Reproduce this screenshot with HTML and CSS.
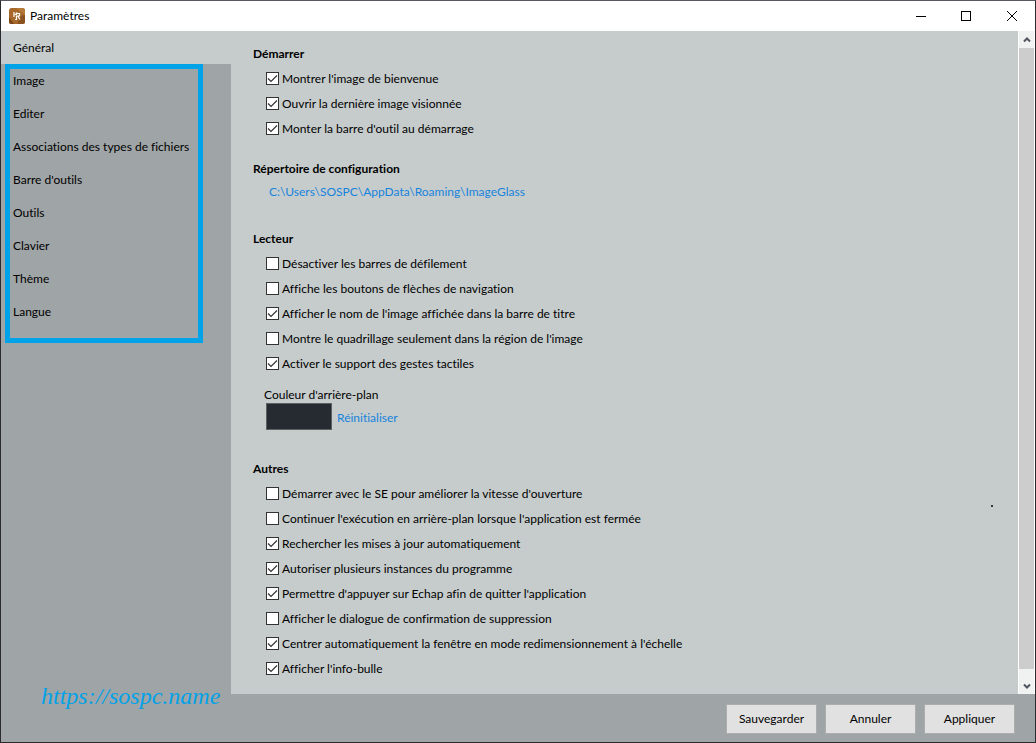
FILE: index.html
```html
<!DOCTYPE html>
<html lang="fr">
<head>
<meta charset="utf-8">
<title>Paramètres</title>
<link rel="stylesheet" href="styles.css">
</head>
<body>
<div class="window">
  <header class="titlebar">
    <svg class="app-icon" viewBox="0 0 16 16" aria-hidden="true">
      <rect width="16" height="16" rx="2.5" fill="#a8682c"/>
      <path d="M0 9L5 16H2.5Q0 16 0 13.5Z" fill="#7a4718"/>
      <path d="M7 0H13.5Q16 0 16 2.5V7Z" fill="#b57a38"/>
      <path d="M12 8L16 7V13.5Q16 16 13.5 16H8Z" fill="#8a5220"/>
      <path d="M5 4V9M8 4.500L6 7M7.500 7.500V5.500H10.500V8H8M7.500 8V11.500M9 8.500L11 11.500M6 11.500H8" fill="none" stroke="#fff" stroke-width="1.200"/>
    </svg>
    <h1 class="title">Paramètres</h1>
    <div class="caption-buttons">
      <button class="caption" type="button" aria-label="Réduire"><svg viewBox="0 0 12 12"><path d="M2 6.500H12" shape-rendering="crispEdges"/></svg></button>
      <button class="caption" type="button" aria-label="Agrandir"><svg viewBox="0 0 12 12"><path d="M1.500 1.500H10.500V10.500H1.500Z" shape-rendering="crispEdges"/></svg></button>
      <button class="caption" type="button" aria-label="Fermer"><svg viewBox="0 0 12 12"><path d="M1 1L11 11M11 1L1 11"/></svg></button>
    </div>
  </header>
  <div class="body">
    <nav class="sidebar">
      <button class="tab tab-active" type="button">Général</button>
      <div class="tab-group">
        <button class="tab" type="button">Image</button>
        <button class="tab" type="button">Editer</button>
        <button class="tab" type="button">Associations des types de fichiers</button>
        <button class="tab" type="button">Barre d'outils</button>
        <button class="tab" type="button">Outils</button>
        <button class="tab" type="button">Clavier</button>
        <button class="tab" type="button">Thème</button>
        <button class="tab" type="button">Langue</button>
        <span class="highlight"></span>
      </div>
    </nav>
    <main class="content">
      <section class="section">
        <h2 class="heading">Démarrer</h2>
        <div class="options">
          <label class="option"><input class="check" type="checkbox" checked>Montrer l'image de bienvenue</label>
          <label class="option"><input class="check" type="checkbox" checked>Ouvrir la dernière image visionnée</label>
          <label class="option"><input class="check" type="checkbox" checked>Monter la barre d'outil au démarrage</label>
        </div>
      </section>
      <section class="section section-config">
        <h2 class="heading">Répertoire de configuration</h2>
        <a class="link config-link" href="#">C:\Users\SOSPC\AppData\Roaming\ImageGlass</a>
      </section>
      <section class="section">
        <h2 class="heading">Lecteur</h2>
        <div class="options">
          <label class="option"><input class="check" type="checkbox">Désactiver les barres de défilement</label>
          <label class="option"><input class="check" type="checkbox">Affiche les boutons de flèches de navigation</label>
          <label class="option"><input class="check" type="checkbox" checked>Afficher le nom de l'image affichée dans la barre de titre</label>
          <label class="option"><input class="check" type="checkbox">Montre le quadrillage seulement dans la région de l'image</label>
          <label class="option"><input class="check" type="checkbox" checked>Activer le support des gestes tactiles</label>
        </div>
        <div class="background">
          <span class="background-label" id="bg-label">Couleur d'arrière-plan</span>
          <div class="background-row">
            <button class="swatch" type="button" aria-labelledby="bg-label"></button>
            <a class="link" href="#">Réinitialiser</a>
          </div>
        </div>
      </section>
      <section class="section section-other">
        <h2 class="heading">Autres</h2>
        <div class="options">
          <label class="option"><input class="check" type="checkbox">Démarrer avec le SE pour améliorer la vitesse d'ouverture</label>
          <label class="option"><input class="check" type="checkbox">Continuer l'exécution en arrière-plan lorsque l'application est fermée</label>
          <label class="option"><input class="check" type="checkbox" checked>Rechercher les mises à jour automatiquement</label>
          <label class="option"><input class="check" type="checkbox" checked>Autoriser plusieurs instances du programme</label>
          <label class="option"><input class="check" type="checkbox" checked>Permettre d'appuyer sur Echap afin de quitter l'application</label>
          <label class="option"><input class="check" type="checkbox">Afficher le dialogue de confirmation de suppression</label>
          <label class="option"><input class="check" type="checkbox" checked>Centrer automatiquement la fenêtre en mode redimensionnement à l'échelle</label>
          <label class="option"><input class="check" type="checkbox" checked>Afficher l'info-bulle</label>
        </div>
      </section>
      <span class="speck"></span>
    </main>
    <div class="scrollbar">
      <button class="arrow" type="button" aria-label="Défiler vers le haut"><svg viewBox="0 0 8 6"><path d="M1 4.500L4 1.500L7 4.500"/></svg></button>
      <div class="thumb"></div>
      <button class="arrow arrow-down" type="button" aria-label="Défiler vers le bas"><svg viewBox="0 0 8 6"><path d="M1 1.500L4 4.500L7 1.500"/></svg></button>
    </div>
  </div>
  <footer class="footer">
    <button class="action" type="button">Sauvegarder</button>
    <button class="action" type="button">Annuler</button>
    <button class="action" type="button">Appliquer</button>
  </footer>
  <a class="watermark" href="#">https://sospc.name</a>
</div>
</body>
</html>
```
FILE: styles.css
```css
* { box-sizing: border-box; }

body {
  margin: 0;
  font: 12px/16px Lato, "Open Sans", sans-serif;
  font-variant-ligatures: none;
  color: #000;
}

button {
  border: 0;
  border-radius: 0;
  padding: 0;
  background: none;
  font: inherit;
  font-variant-ligatures: none;
  color: inherit;
}

.window {
  position: relative;
  display: flex;
  flex-direction: column;
  min-height: 100vh;
  border: 1px solid #2b2b2f;
  border-top-color: #565963;
  background: #9fa4a6;
}

.titlebar {
  display: flex;
  align-items: center;
  height: 30px;
  padding-left: 8px;
  background: #fff;
}

.app-icon { width: 16px; height: 16px; }

.title {
  flex: 1;
  margin: 0 0 0 5px;
  font-size: 12px;
  font-weight: 400;
}

.caption-buttons { display: flex; }

.caption {
  display: grid;
  place-items: center;
  width: 46px;
  height: 30px;
}

.caption svg {
  width: 12px;
  height: 12px;
  fill: none;
  stroke: #000;
}

.body { display: flex; flex: 1; }

.sidebar { flex: none; width: 230px; }

.tab {
  display: block;
  width: 100%;
  height: 33px;
  padding-left: 12px;
  text-align: left;
}

.tab-active { background: #c6cccc; }

.tab-group { position: relative; }

.highlight {
  position: absolute;
  inset: 0 28px -15px 4px;
  border: 5px solid #00a2e8;
  pointer-events: none;
}

.content {
  position: relative;
  flex: 1;
  padding: 15px 22px 10px;
  background: #c6cccc;
}

.heading {
  margin: 0 0 4px;
  font-size: 12px;
  font-weight: 700;
}

.section + .section { margin-top: 20px; }

.section-config + .section,
.section + .section-other { margin-top: 31px; }

.options {
  display: flex;
  flex-direction: column;
  align-items: flex-start;
  padding-left: 13px;
}

.option {
  display: flex;
  align-items: center;
  gap: 3px;
  height: 25px;
}

.check {
  appearance: none;
  width: 13px;
  height: 13px;
  margin: 0;
  border: 1px solid #333;
  background: #fff;
}

.check:checked {
  background: #fff url("data:image/svg+xml,%3Csvg xmlns='http://www.w3.org/2000/svg' viewBox='0 0 11 11'%3E%3Cpath d='M1 5.500L4 8.500L10 2.500' fill='none' stroke='%23333' stroke-width='1.200'/%3E%3C/svg%3E");
}

.link { color: #1683dc; text-decoration: none; }

.config-link { display: block; margin: 7px 0 0 16px; }

.background { padding: 11px 0 0 11px; }

.background-label { display: block; }

.background-row {
  display: flex;
  align-items: flex-end;
  gap: 5px;
  padding-left: 2px;
}

.background-row .link { padding-bottom: 4px; }

.swatch {
  width: 66px;
  height: 27px;
  border: 1px solid #5c6063;
  background: #252b30;
}

.speck {
  position: absolute;
  right: 25px;
  top: 474px;
  width: 2px;
  height: 2px;
  background: #333;
}

.scrollbar {
  display: flex;
  flex-direction: column;
  width: 17px;
  border: solid #fff;
  border-width: 0 1px;
  background: #f0f1f1;
}

.arrow {
  display: grid;
  place-items: center;
  height: 17px;
}

.arrow-down { height: 25px; padding-top: 8px; }

.arrow svg {
  width: 8px;
  height: 6px;
  fill: none;
  stroke: #505560;
  stroke-width: 2;
}

.thumb { flex: 1; background: #cdcdcd; }

.footer {
  display: flex;
  justify-content: flex-end;
  gap: 8px;
  padding: 10px 20px 8px;
}

.action {
  width: 91px;
  height: 30px;
  border: 1px solid #adadad;
  background: #e1e1e1;
}

.watermark {
  position: absolute;
  left: 40px;
  bottom: 32px;
  font: italic 24px/28px "Liberation Serif", serif;
  color: #00a2e8;
  text-decoration: none;
}
```
